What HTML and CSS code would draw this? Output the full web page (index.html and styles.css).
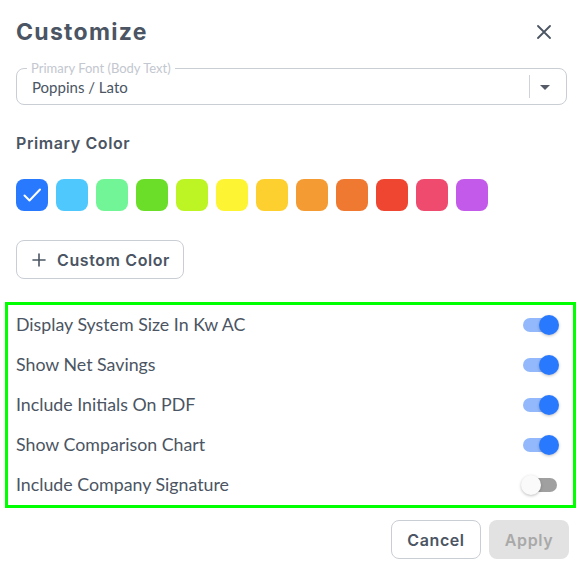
FILE: index.html
```html
<!DOCTYPE html>
<html>
<head>
<meta charset="utf-8">
<link rel="stylesheet" href="styles.css">
</head>
<body>
<div class="dialog">
  <div class="header">
    <h1 class="title">Customize</h1>
    <button class="close" aria-label="close">
      <svg width="14" height="14" viewBox="0 0 14 14"><path d="M1 1L13 13M13 1L1 13" stroke="#4b5563" stroke-width="1.8" stroke-linecap="round"/></svg>
    </button>
  </div>

  <div class="select">
    <span class="select-label">Primary Font (Body Text)</span>
    <span class="select-value">Poppins / Lato</span>
    <span class="select-divider"></span>
    <span class="select-arrow"></span>
  </div>

  <div class="section-title">Primary Color</div>

  <div class="swatches">
    <div class="swatch selected" style="background:#2979ff">
      <svg width="32" height="32" viewBox="0 0 32 32"><path d="M8.5 16.5L13.5 21.5L24 10.5" fill="none" stroke="#fff" stroke-width="2" stroke-linecap="round" stroke-linejoin="round"/></svg>
    </div>
    <div class="swatch" style="background:#4fc8fd"></div>
    <div class="swatch" style="background:#72f597"></div>
    <div class="swatch" style="background:#6ade28"></div>
    <div class="swatch" style="background:#bdf424"></div>
    <div class="swatch" style="background:#fdf534"></div>
    <div class="swatch" style="background:#fdd030"></div>
    <div class="swatch" style="background:#f49c33"></div>
    <div class="swatch" style="background:#f07932"></div>
    <div class="swatch" style="background:#ee4631"></div>
    <div class="swatch" style="background:#ee4b6e"></div>
    <div class="swatch" style="background:#c35ae9"></div>
  </div>

  <button class="custom-btn">
    <svg width="14" height="14" viewBox="0 0 14 14"><path d="M7 1V13M1 7H13" stroke="#4b5563" stroke-width="1.6" stroke-linecap="round"/></svg>
    <span>Custom Color</span>
  </button>

  <div class="options">
    <div class="row"><span class="row-label">Display System Size In Kw AC</span><span class="switch on"><span class="track"></span><span class="thumb"></span></span></div>
    <div class="row"><span class="row-label">Show Net Savings</span><span class="switch on"><span class="track"></span><span class="thumb"></span></span></div>
    <div class="row"><span class="row-label">Include Initials On PDF</span><span class="switch on"><span class="track"></span><span class="thumb"></span></span></div>
    <div class="row"><span class="row-label">Show Comparison Chart</span><span class="switch on"><span class="track"></span><span class="thumb"></span></span></div>
    <div class="row"><span class="row-label">Include Company Signature</span><span class="switch off"><span class="track"></span><span class="thumb"></span></span></div>
  </div>

  <div class="actions">
    <button class="btn cancel">Cancel</button>
    <button class="btn apply" disabled>Apply</button>
  </div>
</div>
</body>
</html>
```

FILE: styles.css
```css
* { box-sizing: border-box; }
html, body { margin: 0; padding: 0; background: #fff; }
body { font-family: "Lato", "Liberation Sans", sans-serif; color: #4b5563; }

.dialog {
  width: 587px;
  padding: 14px 18px 0 16px;
}

.header {
  display: flex;
  align-items: center;
  justify-content: space-between;
  height: 36px;
}
.title {
  margin: 0;
  font-family: "Inter", "Open Sans", sans-serif;
  font-weight: 700;
  font-size: 23px;
  letter-spacing: 1.3px;
  color: #4b5563;
  line-height: 36px;
}
.close {
  border: 0;
  background: none;
  padding: 0;
  margin-right: 18px;
  width: 14px;
  height: 14px;
  display: flex;
}

.select {
  position: relative;
  margin-top: 18px;
  width: 551px;
  height: 37px;
  border: 1px solid #c9cdd4;
  border-radius: 8px;
  display: flex;
  align-items: center;
  padding-left: 15px;
}
.select-label {
  position: absolute;
  left: 10px;
  top: -9px;
  padding: 0 4px;
  background: #fff;
  font-size: 13px;
  line-height: 16px;
  color: #c3c7cf;
}
.select-value {
  flex: 1;
  font-size: 15px;
  color: #4b5563;
  padding-top: 1px;
}
.select-divider {
  width: 1px;
  height: 23px;
  background: #cfd2d8;
}
.select-arrow {
  width: 0;
  height: 0;
  margin: 2px 16px 0 10px;
  border-left: 5px solid transparent;
  border-right: 5px solid transparent;
  border-top: 5px solid #555b66;
}

.section-title {
  margin-top: 28px;
  font-family: "Inter", "Open Sans", sans-serif;
  font-weight: 600;
  font-size: 16px;
  line-height: 20px;
  letter-spacing: 0.6px;
  color: #4b5563;
}

.swatches {
  display: flex;
  gap: 8px;
  margin-top: 26px;
}
.swatch {
  width: 32px;
  height: 32px;
  border-radius: 8px;
  display: flex;
}

.custom-btn {
  margin-top: 29px;
  width: 168px;
  height: 39px;
  border: 1px solid #c9cdd4;
  border-radius: 8px;
  background: #fff;
  display: flex;
  align-items: center;
  gap: 11px;
  padding: 0 0 0 15px;
  font-family: "Inter", "Open Sans", sans-serif;
  font-weight: 600;
  font-size: 16px;
  letter-spacing: 0.6px;
  color: #4b5563;
}

.options {
  margin: 23px -7px 0 -11px;
  border: 3px solid #00ff00;
  padding: 0 14px 0 8px;
}
.row {
  height: 40px;
  display: flex;
  align-items: center;
  justify-content: space-between;
}
.row-label {
  font-size: 17.8px;
  color: #4b5563;
  margin-top: -2px;
}
.switch {
  position: relative;
  width: 38px;
  height: 20px;
  display: block;
}
.track {
  position: absolute;
  left: 2px;
  right: 2px;
  top: 3px;
  height: 14px;
  border-radius: 7px;
}
.thumb {
  position: absolute;
  top: 0;
  width: 20px;
  height: 20px;
  border-radius: 50%;
  box-shadow: 0 1px 3px rgba(0,0,0,0.25);
}
.switch.on .track { background: #93b9fc; }
.switch.on .thumb { right: 0; background: #2979ff; }
.switch.off .track { background: #a0a0a0; }
.switch.off .thumb { left: 0; background: #fafafa; }

.actions {
  display: flex;
  justify-content: flex-end;
  gap: 8px;
  margin-top: 12px;
}
.btn {
  height: 39px;
  border-radius: 8px;
  font-family: "Inter", "Open Sans", sans-serif;
  font-weight: 600;
  font-size: 16px;
  letter-spacing: 0.6px;
}
.cancel {
  width: 90px;
  border: 1px solid #c9cdd4;
  background: #fff;
  color: #4b5563;
}
.apply {
  width: 80px;
  border: 0;
  background: #e2e2e2;
  color: #a9a9a9;
}
```
